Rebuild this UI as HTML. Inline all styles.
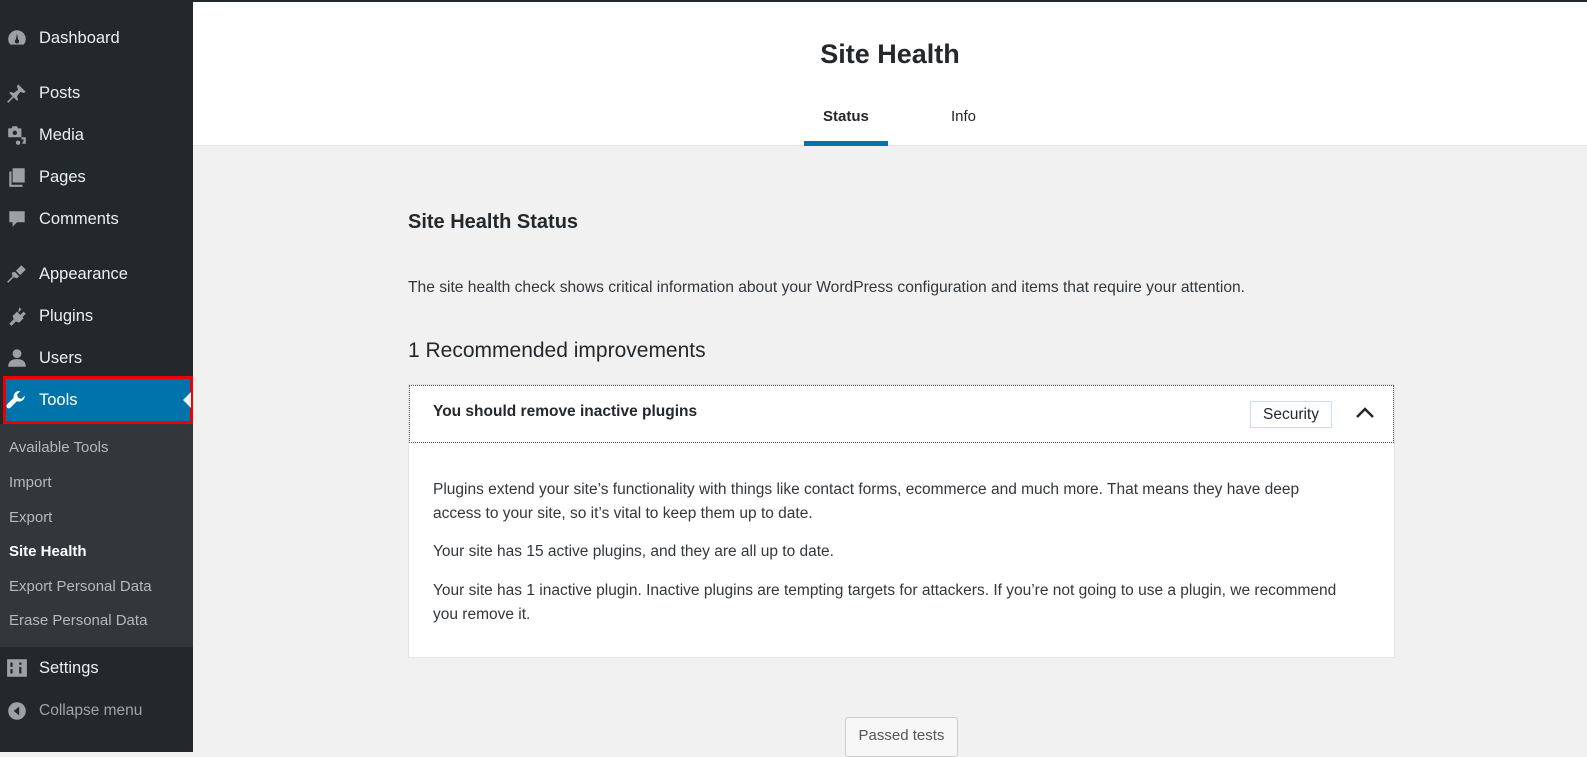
<!DOCTYPE html>
<html><head><meta charset="utf-8"><style>
*{box-sizing:border-box;margin:0;padding:0}
body{width:1587px;height:752px;overflow:hidden;font-family:"Liberation Sans",sans-serif;background:#f1f1f1;position:relative;color:#23282d}
#side{position:absolute;left:0;top:0;width:193px;height:752px;background:#23282d}
.mi{position:absolute;left:0;width:193px;height:34px;color:#eee;font-size:16.5px;line-height:34px;padding-left:39px}
.mi svg{position:absolute;left:6px;top:6px;width:22px;height:22px;fill:#9ca1a6}
#sub{position:absolute;left:0;top:424px;width:193px;height:223px;background:#32373c}
.si{position:absolute;left:9px;font-size:15px;color:#b4b9be}
#top{position:absolute;left:193px;top:0;right:0;height:146px;background:#fff;border-bottom:1px solid #e2e4e7;border-top:2px solid #23282d}
h1{position:absolute;left:0;right:0;top:37px;text-align:center;font-size:27px;font-weight:bold;color:#23282d}
.tab{position:absolute;top:106px;font-size:15px;color:#23282d}
#ul{position:absolute;left:611px;top:139px;width:84px;height:5px;background:#0073aa}
.t{position:absolute;left:408px;white-space:nowrap}
#panel{position:absolute;left:408px;top:384px;width:987px;height:274px;background:#fff;border:1px solid #e2e4e7}
#ph{position:absolute;left:0;top:0;width:985px;height:58px;border:1px dotted #555;}
.pt{position:absolute;left:24px;font-size:15.5px;color:#32373c;line-height:24px;white-space:nowrap}
</style></head><body>
<div id="side">
<div class="mi" style="top:21px"><svg viewBox="0 0 20 20"><path d="M10 3a8 8 0 0 0-8 8c0 2 .7 3.8 2 5h12a8 8 0 0 0 2-5 8 8 0 0 0-8-8zm0 12a2 2 0 0 1-1-3.7L10 6l1 5.3A2 2 0 0 1 10 15z"/></svg>Dashboard</div>
<div class="mi" style="top:76px"><svg viewBox="0 0 20 20"><path d="M11 2l7 7-2 1-3-1-3 4 1 3-1 1-3-3-5 5-1-1 5-5-3-3 1-1 3 1 4-3-1-3z"/></svg>Posts</div>
<div class="mi" style="top:118px"><svg viewBox="0 0 20 20"><path d="M2 4h3l1-2h4l1 2h3v8H2zM8 6a2 2 0 1 0 0 4 2 2 0 0 0 0-4zm6 6h4v6h-3v-2h1v-2h-2z"/><circle cx="11" cy="17" r="2"/></svg>Media</div>
<div class="mi" style="top:160px"><svg viewBox="0 0 20 20"><path d="M6 2h11v13H6zM3 5h2v12h10v2H3z"/></svg>Pages</div>
<div class="mi" style="top:202px"><svg viewBox="0 0 20 20"><path d="M3 3h14v10h-7l-4 4v-4H3z"/></svg>Comments</div>
<div class="mi" style="top:257px"><svg viewBox="0 0 20 20"><path d="M14 2l4 4-5 5-4-4zM8 8l4 4-2 2-3-1-5 5-1-1 5-5-1-3z"/></svg>Appearance</div>
<div class="mi" style="top:299px"><svg viewBox="0 0 20 20"><path d="M12 2l2 2-3 3 2 2 3-3 2 2-3 3 1 1-4 4-3-1-4 4-2-2 4-4-1-3 4-4 1 1z"/></svg>Plugins</div>
<div class="mi" style="top:341px"><svg viewBox="0 0 20 20"><circle cx="10" cy="6" r="4"/><path d="M2 18c0-5 3-7 8-7s8 2 8 7z"/></svg>Users</div>
<div style="position:absolute;left:3px;top:376px;width:190px;height:48px;background:#0073aa;border:3px solid #e00"></div>
<div class="mi" style="top:383px;color:#fff"><svg viewBox="0 0 20 20" style="fill:#fff"><path d="M17 6l-3 3-3-1-1-3 3-3a5 5 0 0 0-6 6L1 14a2 2 0 0 0 3 3l6-6a5 5 0 0 0 7-5z"/></svg>Tools</div>
<div style="position:absolute;left:183px;top:392px;border:8px solid transparent;border-right:8px solid #f1f1f1;border-left:0"></div>
<div id="sub">
<div class="si" style="top:15px">Available Tools</div>
<div class="si" style="top:50px">Import</div>
<div class="si" style="top:85px">Export</div>
<div class="si" style="top:119px;color:#fff;font-weight:bold">Site Health</div>
<div class="si" style="top:154px">Export Personal Data</div>
<div class="si" style="top:188px">Erase Personal Data</div>
</div>
<div class="mi" style="top:651px"><svg viewBox="0 0 20 20"><path d="M1 2h18v16H1zm3 3v10h2V5zm8 0v10h2V5zM3 9h4v2H3zm8-2h4v2h-4z"/></svg>Settings</div>
<div class="mi" style="top:694px;color:#a0a5aa;font-size:15.5px"><svg viewBox="0 0 20 20"><circle cx="10" cy="10" r="8"/><path d="M12 6v8l-5-4z" fill="#23282d"/></svg>Collapse menu</div>
</div>
<div id="top"><h1>Site Health</h1>
<div class="tab" style="left:630px;font-weight:bold">Status</div>
<div class="tab" style="left:758px">Info</div>
<div id="ul"></div></div>
<div class="t" style="top:211px;font-size:20px;font-weight:bold">Site Health Status</div>
<div class="t" style="top:279px;font-size:15.6px;color:#32373c">The site health check shows critical information about your WordPress configuration and items that require your attention.</div>
<div class="t" style="top:339px;font-size:21px;color:#23282d">1 Recommended improvements</div>
<div id="panel"><div id="ph">
<div style="position:absolute;left:23px;top:17px;font-size:15.5px;font-weight:bold">You should remove inactive plugins</div>
<div style="position:absolute;left:840px;top:15px;width:82px;height:27px;border:1px solid #bde3f5;text-align:center;line-height:25px;font-size:15.5px">Security</div>
<svg style="position:absolute;left:945px;top:20px" width="20" height="14" viewBox="0 0 20 14"><path d="M2 11l8-8 8 8" fill="none" stroke="#23282d" stroke-width="2.5"/></svg>
</div>
<div class="pt" style="top:93px">Plugins extend your site’s functionality with things like contact forms, ecommerce and much more. That means they have deep<br>access to your site, so it’s vital to keep them up to date.</div>
<div class="pt" style="top:155px">Your site has 15 active plugins, and they are all up to date.</div>
<div class="pt" style="top:194px">Your site has 1 inactive plugin. Inactive plugins are tempting targets for attackers. If you’re not going to use a plugin, we recommend<br>you remove it.</div>
</div>
<div style="position:absolute;left:845px;top:717px;width:113px;height:40px;border:1px solid #ccc;background:#f7f7f7;border-radius:3px;font-size:15px;text-align:center;padding-top:9px;color:#555">Passed tests</div>
</body></html>
